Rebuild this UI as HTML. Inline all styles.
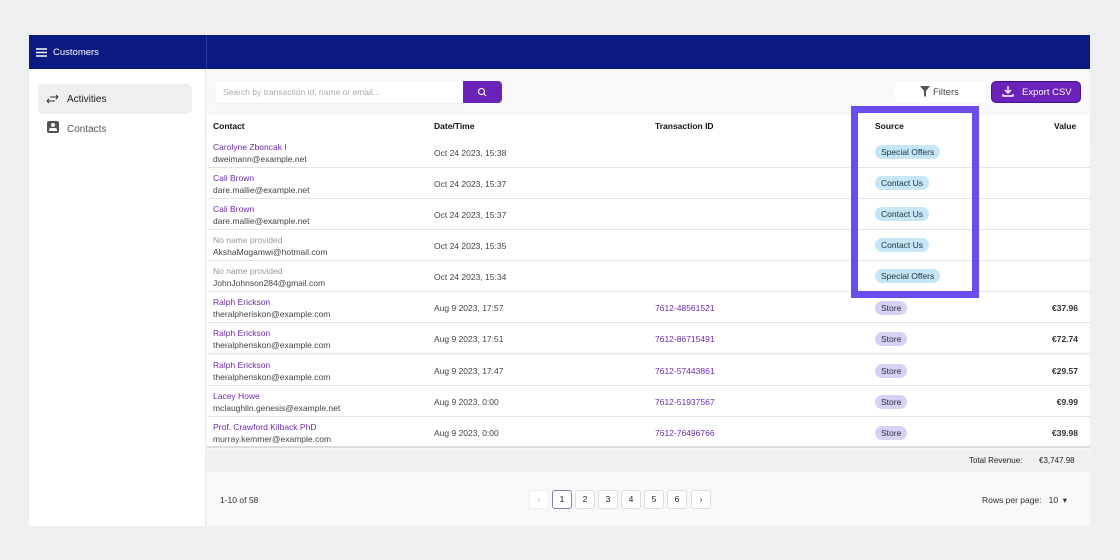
<!DOCTYPE html>
<html><head><style>
*{box-sizing:border-box;margin:0;padding:0}
body{width:1120px;height:560px;background:#efeff0;font-family:"Liberation Sans",sans-serif;position:relative;overflow:hidden}
.app{position:absolute;left:29px;top:35px;width:1061px;height:491px;background:#f8f8f9}
.hdr{position:absolute;left:0;top:0;width:1061px;height:34px;background:#0b1a82}
.hdr .sep{position:absolute;left:177px;top:0;width:1px;height:34px;background:#2a3896}
.hdr .t{position:absolute;left:24px;top:12px;color:#fff;font-size:9.5px}
.side{position:absolute;left:0;top:34px;width:177px;height:457px;background:#fff;border-right:1px solid #e8e8ea}
.nav{position:absolute;left:9px;width:154px;height:30px;font-size:10px;color:#222;padding:10px 0 0 29px}
.a{position:absolute;font-size:8.5px}
.row{position:absolute;left:178px;width:883px;height:31px;background:#fff;border-bottom:1.5px solid #e4e4e6}
.row .n{position:absolute;left:6px;top:5px;font-size:8.5px;color:#6a2aa8}
.row .n.g{color:#999}
.row .e{position:absolute;left:6px;top:17px;font-size:8.5px;color:#444}
.row .d{position:absolute;left:227px;top:11px;font-size:8.5px;color:#444}
.row .x{position:absolute;left:448px;top:11px;font-size:8.5px;color:#6a2aa8}
.row .v{position:absolute;right:12px;top:11px;font-size:8.5px;color:#333;font-weight:bold}
.chip{position:absolute;left:668px;top:9px;height:14px;border-radius:7px;font-size:8.5px;padding:2px 6px;color:#234;line-height:10px}
.blue{background:#c4e6f7}.pur{background:#d6d2f3}
.pg{position:absolute;top:455px;width:20px;height:19px;border:1px solid #ddd;background:#fff;border-radius:3px;font-size:8.5px;text-align:center;line-height:17px;color:#222}
</style></head><body>
<div class="app">
<div class="hdr"><div class="sep"></div>
<svg style="position:absolute;left:7px;top:13px" width="11" height="9"><path d="M0 1h11M0 4.5h11M0 8h11" stroke="#fff" stroke-width="1.4"/></svg>
<div class="t">Customers</div></div>
<div class="side">
<div class="nav" style="top:15px;background:#efeff0;border-radius:5px;">Activities</div>
<svg style="position:absolute;left:17px;top:25px" width="13" height="10"><path d="M1 7h8M1 7l2-2M1 7l2 2M4 3h8M12 3l-2-2M12 3l-2 2" stroke="#333" stroke-width="1.1" fill="none"/></svg>
<div class="nav" style="top:45px;color:#555">Contacts</div>
<div style="position:absolute;left:18px;top:52px;width:12px;height:12px;background:#555;border-radius:2px"></div>
<div style="position:absolute;left:22px;top:54px;width:4px;height:4px;background:#fff;border-radius:2px"></div>
<div style="position:absolute;left:20px;top:59px;width:8px;height:3px;background:#fff;border-radius:2px 2px 0 0"></div>
</div>
<div style="position:absolute;left:187px;top:46px;width:247px;height:22px;background:#fff;border-radius:4px 0 0 4px;box-shadow:0 1px 2px rgba(0,0,0,.06)"></div>
<div class="a" style="left:194px;top:52px;color:#aaa;font-size:8.5px">Search by transaction id, name or email...</div>
<div style="position:absolute;left:434px;top:46px;width:39px;height:22px;background:#6a22b8;border-radius:0 4px 4px 0"></div>
<svg style="position:absolute;left:448px;top:52px" width="10" height="10"><circle cx="4.5" cy="4.5" r="3" stroke="#fff" fill="none" stroke-width="1.1"/><path d="M6.8 6.8L9 9" stroke="#fff" stroke-width="1.1"/></svg>
<div style="position:absolute;left:866px;top:46px;width:90px;height:22px;background:#fff;border-radius:5px"></div>
<svg style="position:absolute;left:891px;top:51px" width="10" height="11"><path d="M0 0h10L6 5v6L4 10V5z" fill="#555"/></svg>
<div class="a" style="left:904px;top:52px;color:#444;font-size:9.5px">Filters</div>
<div style="position:absolute;left:962px;top:46px;width:90px;height:22px;background:#6a22b8;border-radius:5px;border:1px solid #4a1090"></div>
<svg style="position:absolute;left:973px;top:50px" width="12" height="12"><path d="M6 1v7M3 5l3 3 3-3M1 9v2h10V9" stroke="#fff" stroke-width="1.4" fill="none"/></svg>
<div class="a" style="left:993px;top:52px;color:#fff;font-size:9.5px">Export CSV</div>
<div class="row" style="top:80px;height:22px;border-bottom:none;box-shadow:0 2px 3px rgba(0,0,0,.05)"></div>
<div class="a" style="left:184px;top:86px;font-weight:bold;color:#111">Contact</div>
<div class="a" style="left:405px;top:86px;font-weight:bold;color:#111">Date/Time</div>
<div class="a" style="left:626px;top:86px;font-weight:bold;color:#111">Transaction ID</div>
<div class="a" style="left:1025px;top:86px;font-weight:bold;color:#111">Value</div>

<div class="row" style="top:102px"><div class="n">Carolyne Zboncak I</div><div class="e">dweimann@example.net</div><div class="d">Oct 24 2023, 15:38</div></div>
<div class="row" style="top:133px"><div class="n">Cali Brown</div><div class="e">dare.mallie@example.net</div><div class="d">Oct 24 2023, 15:37</div></div>
<div class="row" style="top:164px"><div class="n">Cali Brown</div><div class="e">dare.mallie@example.net</div><div class="d">Oct 24 2023, 15:37</div></div>
<div class="row" style="top:195px"><div class="n g">No name provided</div><div class="e">AkshaMogamwi@hotmail.com</div><div class="d">Oct 24 2023, 15:35</div></div>
<div class="row" style="top:226px"><div class="n g">No name provided</div><div class="e">JohnJohnson284@gmail.com</div><div class="d">Oct 24 2023, 15:34</div></div>
<div class="row" style="top:257px"><div class="n">Ralph Erickson</div><div class="e">theralpheriskon@example.com</div><div class="d">Aug 9 2023, 17:57</div><div class="x">7612-48561521</div><div class="chip pur">Store</div><div class="v">€37.96</div></div>
<div class="row" style="top:288px"><div class="n">Ralph Erickson</div><div class="e">theralpheriskon@example.com</div><div class="d">Aug 9 2023, 17:51</div><div class="x">7612-86715491</div><div class="chip pur">Store</div><div class="v">€72.74</div></div>
<div class="row" style="top:320px"><div class="n">Ralph Erickson</div><div class="e">theralpheriskon@example.com</div><div class="d">Aug 9 2023, 17:47</div><div class="x">7612-57443861</div><div class="chip pur">Store</div><div class="v">€29.57</div></div>
<div class="row" style="top:351px"><div class="n">Lacey Howe</div><div class="e">mclaughlin.genesis@example.net</div><div class="d">Aug 9 2023, 0:00</div><div class="x">7612-51937567</div><div class="chip pur">Store</div><div class="v">€9.99</div></div>
<div class="row" style="top:382px;border-bottom:2px solid #ddd"><div class="n">Prof. Crawford Kilback PhD</div><div class="e">murray.kemmer@example.com</div><div class="d">Aug 9 2023, 0:00</div><div class="x">7612-76496766</div><div class="chip pur">Store</div><div class="v">€39.98</div></div>
<div style="position:absolute;left:178px;top:415px;width:883px;height:22px;background:#f0f0f1"></div>
<div class="a" style="left:940px;top:421px;color:#222;font-size:8px">Total Revenue:</div>
<div class="a" style="left:1010px;top:421px;color:#222;font-size:8px">€3,747.98</div>
<div class="a" style="left:191px;top:460px;color:#333;font-size:8.5px">1-10 of 58</div>
<div class="pg" style="left:500px;color:#aaa;border-color:#eee">‹</div>
<div class="pg" style="left:523px;border-color:#8a7aa8">1</div>
<div class="pg" style="left:546px">2</div>
<div class="pg" style="left:569px">3</div>
<div class="pg" style="left:592px">4</div>
<div class="pg" style="left:615px">5</div>
<div class="pg" style="left:638px">6</div>
<div class="pg" style="left:662px">›</div>
<div class="a" style="left:953px;top:460px;color:#333;font-size:8.5px">Rows per page:&nbsp;&nbsp; 10 &nbsp;▾</div>
<div style="position:absolute;left:822px;top:71px;width:128px;height:192px;border:7px solid #6b4cf0"></div>
<div class="a" style="left:846px;top:86px;font-weight:bold;color:#111">Source</div>
<div class="chip blue" style="left:846px;top:110px">Special Offers</div>
<div class="chip blue" style="left:846px;top:141px">Contact Us</div>
<div class="chip blue" style="left:846px;top:172px">Contact Us</div>
<div class="chip blue" style="left:846px;top:203px">Contact Us</div>
<div class="chip blue" style="left:846px;top:234px">Special Offers</div>
</div>
</body></html>
